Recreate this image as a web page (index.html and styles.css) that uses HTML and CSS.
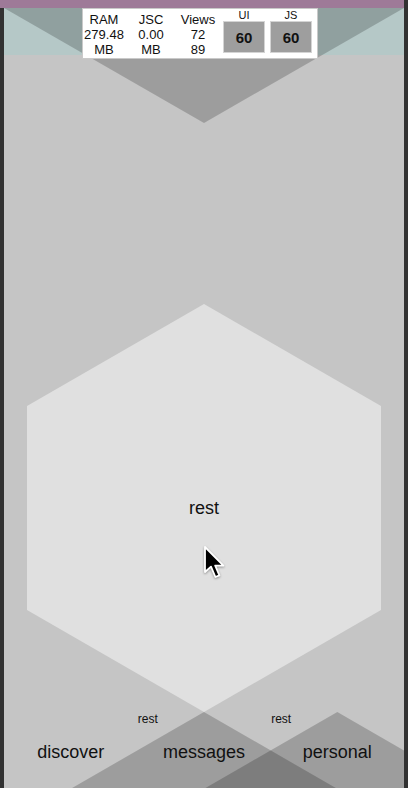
FILE: index.html
```html
<!DOCTYPE html>
<html lang="en">
<head>
<meta charset="utf-8">
<title>Hex tabs</title>
<link rel="stylesheet" href="styles.css">
</head>
<body>
<div class="statusbar"></div>
<div class="screen">
  <div class="header"></div>
  <div class="top-shape"></div>
  <main class="stage">
    <div class="hex"><span class="hex-label">rest</span></div>
  </main>
  <nav class="tabbar">
    <div class="tab">
      <span class="tab-label">discover</span>
    </div>
    <div class="tab">
      <span class="tab-shape"></span>
      <span class="tab-note">rest</span>
      <span class="tab-label">messages</span>
    </div>
    <div class="tab">
      <span class="tab-shape"></span>
      <span class="tab-note">rest</span>
      <span class="tab-label">personal</span>
    </div>
  </nav>
</div>
<div class="perf">
  <div class="stat stat-narrow">RAM<br>279.48<br>MB</div>
  <div class="stat stat-wide">JSC<br>0.00<br>MB</div>
  <div class="stat stat-narrow">Views<br>72<br>89</div>
  <div class="fps fps-ui">
    <div class="fps-label">UI</div>
    <div class="fps-value">60</div>
  </div>
  <div class="fps fps-js">
    <div class="fps-label">JS</div>
    <div class="fps-value">60</div>
  </div>
</div>
<svg class="cursor" width="26" height="38" viewBox="0 0 26 38">
  <path d="M2 2 L2 27 L8 21.6 L12.4 32 L16.4 30.3 L12.2 20.6 L20.4 20.6 Z" fill="#000" stroke="#fff" stroke-width="1.8" stroke-linejoin="round"/>
</svg>
</body>
</html>
```
FILE: styles.css
```css
html, body {
  margin: 0;
  padding: 0;
  width: 408px;
  height: 788px;
  overflow: hidden;
  background: #323232;
}

body {
  position: relative;
  font-family: "Liberation Sans", Arial, sans-serif;
  color: #111;
}

.statusbar {
  width: 404px;
  height: 8px;
  background: #9e7a98;
}

.screen {
  position: relative;
  margin-left: 4px;
  width: 400px;
  height: 780px;
  background: #c5c5c5;
  overflow: hidden;
  display: flex;
  flex-direction: column;
}

.header {
  flex: none;
  height: 47px;
  background: #b5c8c7;
}

.top-shape {
  position: absolute;
  top: 0;
  left: 0;
  width: 400px;
  height: 115px;
  background: rgba(0, 0, 0, 0.2);
  clip-path: polygon(0 0, 100% 0, 50% 100%);
}

.stage {
  flex: 1;
  display: flex;
  justify-content: center;
  align-items: flex-start;
  padding-top: 249px;
}

.hex {
  width: 354px;
  height: 408px;
  background: #e0e0e0;
  clip-path: polygon(50% 0, 100% 25%, 100% 75%, 50% 100%, 0 75%, 0 25%);
  display: flex;
  align-items: center;
  justify-content: center;
}

.hex-label {
  font-size: 18px;
  line-height: 22px;
}

.tabbar {
  flex: none;
  height: 76px;
  display: grid;
  grid-template-columns: repeat(3, 1fr);
}

.tab {
  position: relative;
  display: flex;
  justify-content: center;
  align-items: flex-start;
}

.tab-shape {
  position: absolute;
  top: 0;
  left: 50%;
  margin-left: -177px;
  width: 354px;
  height: 408px;
  background: rgba(0, 0, 0, 0.2);
  clip-path: polygon(50% 0, 100% 25%, 100% 75%, 50% 100%, 0 75%, 0 25%);
}

.tab-note {
  position: absolute;
  top: 1px;
  left: 0;
  width: 21px;
  text-align: center;
  font-size: 12px;
  line-height: 12px;
  z-index: 1;
}

.tab-label {
  position: relative;
  z-index: 1;
  margin-top: 29px;
  font-size: 18px;
  line-height: 22px;
}

.perf {
  position: absolute;
  top: 8px;
  left: 82px;
  width: 236px;
  height: 51px;
  box-sizing: border-box;
  background: #fff;
  border: 1px solid #c9c9c9;
  display: flex;
  align-items: flex-start;
}

.stat {
  padding-top: 3px;
  font-size: 13px;
  line-height: 15px;
  text-align: center;
  color: #111;
}

.stat-narrow {
  width: 42px;
}

.stat-wide {
  width: 52px;
}

.fps {
  width: 42px;
  display: flex;
  flex-direction: column;
}

.fps-ui {
  margin-left: 4px;
}

.fps-js {
  margin-left: 5px;
}

.fps-label {
  height: 12px;
  font-size: 11px;
  line-height: 12px;
  text-align: center;
}

.fps-value {
  height: 32px;
  box-sizing: border-box;
  background: #9e9e9e;
  border: 1px solid #d4d4d4;
  display: flex;
  align-items: center;
  justify-content: center;
  font-size: 15px;
  font-weight: bold;
  color: #111;
}

.cursor {
  position: absolute;
  left: 203px;
  top: 545px;
  filter: drop-shadow(0 1px 1px rgba(0, 0, 0, 0.35));
}
```
